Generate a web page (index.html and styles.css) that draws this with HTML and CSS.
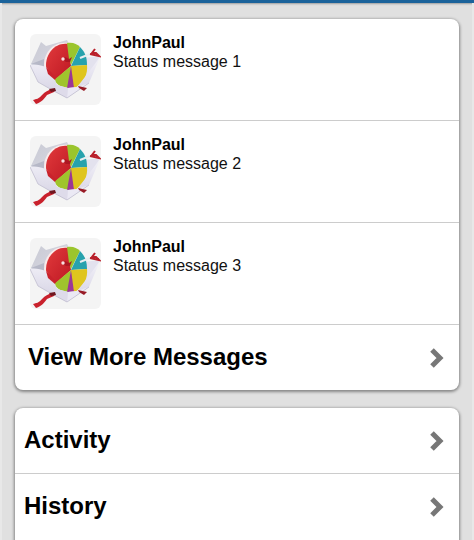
FILE: index.html
```html
<!DOCTYPE html>
<html lang="en">
<head>
    <meta charset="UTF-8" />
    <meta name="viewport" content="width=device-width, initial-scale=1.0" />
    <title>Messages</title>
    <link rel="stylesheet" href="styles.css">
</head>
<body>
    <header class="top-bar"></header>

    <!-- Gift box avatar, shared by all messages -->
    <svg class="sprite" aria-hidden="true">
        <defs>
            <linearGradient id="paper" x1="0" y1="0" x2="1" y2="1">
                <stop offset="0" stop-color="#c9cad4" />
                <stop offset="1" stop-color="#dcdce6" />
            </linearGradient>
            <linearGradient id="box" x1="0" y1="0" x2="0" y2="1">
                <stop offset="0" stop-color="#f3f2f9" />
                <stop offset="1" stop-color="#d3d0e2" />
            </linearGradient>
            <linearGradient id="red" x1="0" y1="0" x2="1" y2="1">
                <stop offset="0" stop-color="#e23a3c" />
                <stop offset="1" stop-color="#bd1823" />
            </linearGradient>
            <symbol id="gift" viewBox="0 0 71 71">
                <rect width="71" height="71" rx="6" fill="#f4f4f4" />
                <path d="M1 30 L11 8 L16 12 L37 6 L40 12 L26 44 Z" fill="url(#paper)" />
                <path d="M1 30 L14 25 L17 40 Z" fill="#b6b8c7" />
                <path d="M54 24 L70 22 L58 48 L42 54 Z" fill="#e3e2ee" />
                <path d="M38 9 C23 7 14 19 14 31 C14 39 18 45 24 49 L32 48 Z" fill="#f9eaea" />
                <path d="M38 10 C25 8 16 20 16 31 C16 38 20 44 25 46 L41 32 Z" fill="url(#red)" />
                <path d="M37 9 C43 8 47 10 50 13 L41 31 L39 25 Z" fill="#9bc52d" />
                <path d="M50 13 C55 18 57 23 57 31 L41 32 Z" fill="#27a2ad" />
                <path d="M41 32 L57 31 C58 40 54 48 45 54 L40 54 Z" fill="#dfc51e" />
                <path d="M41 32 L24 46 C27 51 32 54 39 54 Z" fill="#9fc42d" />
                <path d="M41 32 L37 54 L44 54 Z" fill="#9b3796" />
                <path d="M0 31 C5 30 10 31 16 33 L24 43 L27 51 L38 54 L47 53 L55 43 L70 23 L59 49 L37 64 L22 56 L8 48 Z" fill="url(#box)" />
                <path d="M16 33 L26 43 L25 46 L18 40 Z" fill="#c9222c" />
                <path d="M27 51 L38 54 L37 64 L22 56 Z" fill="#dedbea" />
                <path d="M38 54 L47 53 L59 49 L37 64 Z" fill="#ebe9f4" />
                <path d="M0 31 L8 48 L22 56 L37 64 L59 49" fill="none" stroke="#bcb9cc" stroke-width="0.7" />
                <path d="M32 25 L35 23 L39 25 L42 23 L40 28 L36 28 Z" fill="#ad1722" />
                <circle cx="33" cy="25" r="1.7" fill="#f6dfe0" />
                <path d="M50 24 L60 20" stroke="#e8edf0" stroke-width="2" />
                <path d="M60 20 L69 22 L66 19 L62 19 L65 15" fill="none" stroke="#b91f2a" stroke-width="2" />
                <path d="M25 56 C19 55 16 57 12 61 C9 65 6 65 3 66 L6 70 C12 68 14 65 17 61 L24 58 Z" fill="#c9212c" />
                <path d="M19 55 L25 54 L26 57 L21 58 Z" fill="#6f1720" />
                <path d="M48 52 L57 54 L54 57 L49 54 Z" fill="#981b26" />
            </symbol>
            <symbol id="chevron" viewBox="0 0 14 20">
                <path d="M2 2 L10 10 L2 18" fill="none" stroke="#777777" stroke-width="5" />
            </symbol>
        </defs>
    </svg>

    <main class="content">
        <section class="card">
            <article class="message">
                <svg class="avatar" role="img" aria-label="JohnPaul"><use href="#gift" /></svg>
                <div class="message-text">
                    <h2>JohnPaul</h2>
                    <p>Status message 1</p>
                </div>
            </article>
            <article class="message">
                <svg class="avatar" role="img" aria-label="JohnPaul"><use href="#gift" /></svg>
                <div class="message-text">
                    <h2>JohnPaul</h2>
                    <p>Status message 2</p>
                </div>
            </article>
            <article class="message">
                <svg class="avatar" role="img" aria-label="JohnPaul"><use href="#gift" /></svg>
                <div class="message-text">
                    <h2>JohnPaul</h2>
                    <p>Status message 3</p>
                </div>
            </article>
            <a class="row row-more" href="#messages">
                <span class="row-label">View More Messages</span>
                <svg class="chevron" aria-hidden="true"><use href="#chevron" /></svg>
            </a>
        </section>

        <nav class="card card-last">
            <a class="row" href="#activity">
                <span class="row-label">Activity</span>
                <svg class="chevron" aria-hidden="true"><use href="#chevron" /></svg>
            </a>
            <a class="row" href="#history">
                <span class="row-label">History</span>
                <svg class="chevron" aria-hidden="true"><use href="#chevron" /></svg>
            </a>
        </nav>
    </main>
</body>
</html>
```

FILE: styles.css
```css
body {
    font-family: "Liberation Sans", Arial, sans-serif;
    background-color: #e0e0e0;
    color: #000;
    margin: 0;
}

.sprite {
    display: block;
    width: 0;
    height: 0;
}

.top-bar {
    height: 3px;
    background-color: #1b639b;
    box-shadow: 0 1px 2px rgba(0, 0, 0, 0.3);
}

.content {
    display: flex;
    flex-direction: column;
    gap: 18px;
    padding: 16px 13px 0;
    border-left: 2px solid #e8e8e8;
    border-right: 2px solid #e8e8e8;
}

.card {
    background-color: #fff;
    border-radius: 8px;
    box-shadow: 0 1px 3px 1px rgba(0, 0, 0, 0.4);
}

/* The last card runs on to the bottom of the page */
.card-last {
    border-radius: 8px 8px 0 0;
    padding-bottom: 8px;
}

.message {
    display: flex;
    gap: 12px;
    padding: 15px;
    border-bottom: 1px solid #ccc;
}

.avatar {
    width: 71px;
    height: 71px;
}

.message-text {
    margin-top: -1px;
}

.message-text h2,
.message-text p {
    margin: 0;
    font-size: 16px;
    line-height: 19px;
}

.message-text p {
    color: #111;
}

/* Rows that link to another screen */
.row {
    display: flex;
    justify-content: space-between;
    align-items: center;
    padding: 17px 15px 17px 9px;
    color: #000;
    font-size: 24px;
    font-weight: bold;
    line-height: 29px;
    text-decoration: none;
}

.row + .row {
    border-top: 1px solid #ccc;
}

.row-more {
    padding-left: 13px;
}

.row-label {
    padding-bottom: 2px;
}

.chevron {
    width: 14px;
    height: 20px;
}
```
